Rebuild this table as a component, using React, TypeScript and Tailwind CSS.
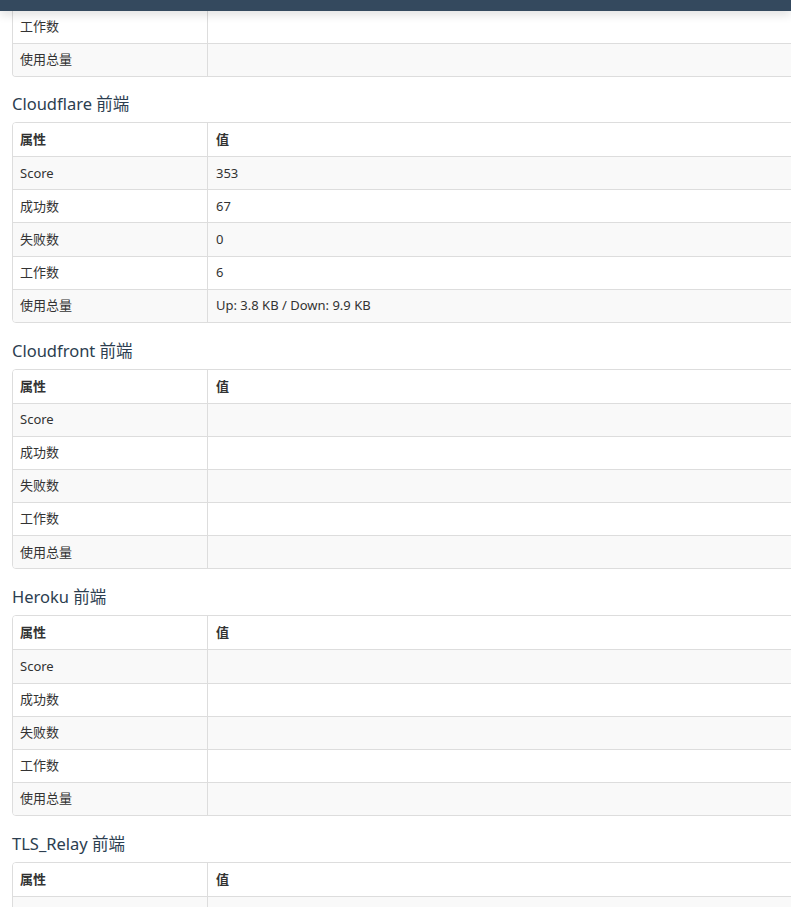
const rowLabels = ["Score", "成功数", "失败数", "工作数", "使用总量"];

type Section = { name: string; values?: string[] };

const sections: Section[] = [
  { name: "Cloudflare", values: ["353", "67", "0", "6", "Up: 3.8 KB / Down: 9.9 KB"] },
  { name: "Cloudfront" },
  { name: "Heroku" },
  { name: "TLS_Relay" },
];

function Row({
  label,
  value,
  striped,
  first,
  bold,
}: {
  label: string;
  value?: string;
  striped: boolean;
  first?: boolean;
  bold?: boolean;
}) {
  return (
    <div
      className={`flex h-[33.1px] ${first ? "" : "border-t border-[#dddddd]"} ${striped ? "bg-[#f9f9f9]" : "bg-white"} ${bold ? "font-bold" : ""}`}
    >
      <div className="w-[195px] shrink-0 border-r border-[#dddddd] pl-[7px] pr-2 flex items-center">{label}</div>
      <div className="flex-1 px-2 flex items-center">{value ?? ""}</div>
    </div>
  );
}

function PropTable({ values }: { values?: string[] }) {
  return (
    <div className="w-[1000px] border border-[#dddddd] rounded-[4px] overflow-hidden">
      <Row label="属性" value="值" striped={false} first bold />
      {rowLabels.map((r, i) => (
        <Row key={r} label={r} value={values?.[i]} striped={i % 2 === 0} />
      ))}
    </div>
  );
}

export default function App() {
  return (
    <div
      className="relative w-[791px] h-[907px] overflow-hidden bg-white text-[13px] text-[#333333]"
      style={{ fontFamily: '"Noto Sans", "Noto Sans CJK SC", sans-serif' }}
    >
      {/* navbar edge */}
      <div className="absolute top-0 left-0 right-0 h-[11px] bg-[#34495e] shadow-[0_4px_10px_rgba(0,0,0,0.12)] z-10" />
      <div className="pl-3 pt-[10px]">
        <div className="w-[1000px] border border-[#dddddd] border-t-0 rounded-b-[4px] overflow-hidden">
          <Row label="工作数" striped={false} first />
          <Row label="使用总量" striped />
        </div>
        {sections.map((s, i) => (
          <div key={s.name}>
            <h4
              className={`${i === 0 ? "mt-[16px]" : "mt-[17px]"} mb-[7px] h-[22px] leading-[22px] text-[16.5px] text-[#2c3e50]`}
            >
              {s.name} 前端
            </h4>
            <PropTable values={s.values} />
          </div>
        ))}
      </div>
    </div>
  );
}
